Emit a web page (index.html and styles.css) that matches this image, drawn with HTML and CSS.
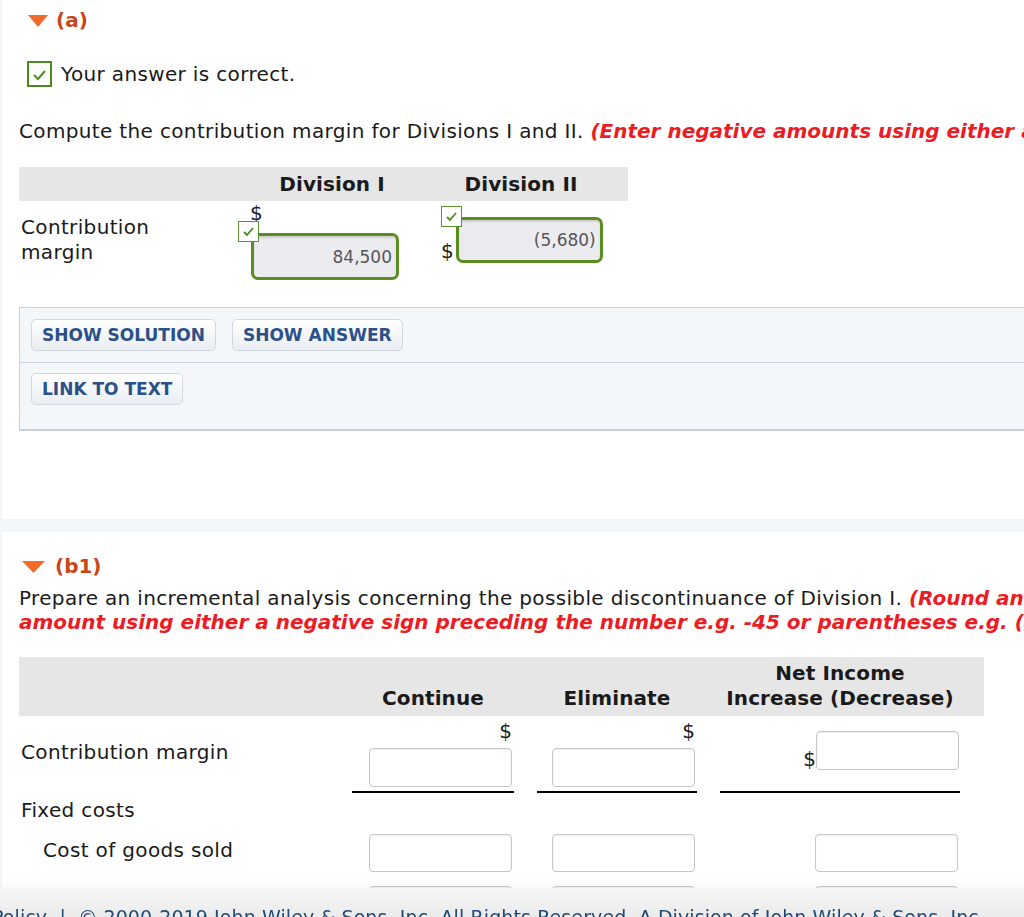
FILE: index.html
```html
<!DOCTYPE html>
<html lang="en">
<head>
<meta charset="utf-8">
<title>Contribution margin</title>
<link rel="stylesheet" href="styles.css">
</head>
<body>
<div class="page">
  <section class="part part-a">
    <h2 class="part-title title-a">
      <svg class="tri" width="20" height="13" viewBox="0 0 20 13"><polygon points="0,0 20,0 10,12" fill="#f26a2b"/></svg>
      <span>(a)</span>
    </h2>

    <div class="correct">
      <span class="chk chk-lg">
        <svg width="21" height="21" viewBox="0 0 21 21"><polyline points="5,11 9,15 16,7" fill="none" stroke="#4b8b1d" stroke-width="2"/></svg>
      </span>
      <span>Your answer is correct.</span>
    </div>

    <p class="prompt">Compute the contribution margin for Divisions I and II. <em class="warn">(Enter negative amounts using either a negative sign preceding the number e.g. -45 or parentheses e.g. (45).)</em></p>

    <div class="t1">
      <div class="t1-head">
        <div></div>
        <div class="th">Division I</div>
        <div class="th">Division II</div>
        <div></div>
      </div>
      <div class="t1-row">
        <div class="t1-label">Contribution<br>margin</div>
        <div class="t1-cell c-div1">
          <span class="chk chk-sm chk-d1">
            <svg width="17" height="17" viewBox="0 0 17 17"><polyline points="4,9 7,12 13,5" fill="none" stroke="#4b8b1d" stroke-width="1.8"/></svg>
          </span>
          <div class="cur">$</div>
          <input class="ans ans-1" value="84,500" readonly>
        </div>
        <div class="t1-cell c-div2">
          <span class="chk chk-sm chk-d2">
            <svg width="17" height="17" viewBox="0 0 17 17"><polyline points="4,9 7,12 13,5" fill="none" stroke="#4b8b1d" stroke-width="1.8"/></svg>
          </span>
          <span class="cur cur-inline">$</span>
          <input class="ans ans-2" value="(5,680)" readonly>
        </div>
        <div></div>
      </div>
    </div>

    <div class="panel panel-top">
      <button class="btn">SHOW SOLUTION</button>
      <button class="btn">SHOW ANSWER</button>
    </div>
    <div class="panel panel-bottom">
      <button class="btn">LINK TO TEXT</button>
    </div>
  </section>

  <section class="part part-b">
    <h2 class="part-title title-b">
      <svg class="tri" width="23" height="13" viewBox="0 0 23 13"><polygon points="0,0 23,0 11.5,12" fill="#f26a2b"/></svg>
      <span>(b1)</span>
    </h2>

    <p class="prompt prompt-b">Prepare an incremental analysis concerning the possible discontinuance of Division I. <em class="warn">(Round answers to 0 decimal places, e.g. 5,275. Enter negative</em><br><em class="warn">amount using either a negative sign preceding the number e.g. -45 or parentheses e.g. (45).)</em></p>

    <div class="t2">
      <div class="t2-grid t2-head">
        <div></div>
        <div class="th">Continue</div>
        <div class="th">Eliminate</div>
        <div class="th">Net Income<br>Increase (Decrease)</div>
      </div>

      <div class="t2-grid t2-row row-cm">
        <div class="t2-label">Contribution margin</div>
        <div class="t2-cell stack">
          <div class="cur">$</div>
          <input class="inp">
        </div>
        <div class="t2-cell stack">
          <div class="cur">$</div>
          <input class="inp">
        </div>
        <div class="t2-cell inline">
          <span class="cur">$</span>
          <input class="inp">
        </div>
      </div>

      <div class="t2-grid t2-row row-head">
        <div class="t2-label">Fixed costs</div>
        <div></div><div></div><div></div>
      </div>

      <div class="t2-grid t2-row row-item">
        <div class="t2-label indent">Cost of goods sold</div>
        <div class="t2-cell"><input class="inp"></div>
        <div class="t2-cell"><input class="inp"></div>
        <div class="t2-cell"><input class="inp"></div>
      </div>

      <div class="t2-grid t2-row row-item">
        <div class="t2-label indent">Salaries and wages</div>
        <div class="t2-cell"><input class="inp"></div>
        <div class="t2-cell"><input class="inp"></div>
        <div class="t2-cell"><input class="inp"></div>
      </div>
    </div>
  </section>
</div>

<footer class="footer">
  <div class="footer-text">Privacy Policy&nbsp;&nbsp;|&nbsp; © 2000-2019 John Wiley &amp; Sons, Inc. All Rights Reserved. A Division of John Wiley &amp; Sons, Inc.</div>
</footer>
</body>
</html>
```

FILE: styles.css
```css
html, body {
  margin: 0;
  padding: 0;
  overflow: hidden;
  height: 100%;
}

body {
  background: #f4f7fa;
  font-family: "DejaVu Sans", Verdana, sans-serif;
  font-size: 20px;
  letter-spacing: 0.35px;
  color: #1a1a1a;
}

.page {
  background: #f4f7fa;
  width: 1024px;
}

.part {
  background: #fff;
  margin-left: 2px;
  padding-left: 17px;
  overflow: hidden;
}

.part-a {
  height: 519px;
}

.part-b {
  margin-top: 13px;
  height: 600px;
}

.part-title {
  margin: 0;
  display: flex;
  align-items: center;
  font-size: 20px;
  font-weight: bold;
  letter-spacing: 0;
  color: #c9461b;
  line-height: 24px;
}

.title-a {
  padding-top: 8px;
  margin-left: 9px;
  gap: 8px;
}

.title-b {
  padding-top: 22px;
  margin-left: 3px;
  gap: 10px;
}

.tri {
  display: block;
  margin-top: 2px;
}

.correct {
  display: flex;
  align-items: center;
  gap: 9px;
  margin-top: 29px;
  margin-left: 8px;
  height: 26px;
  line-height: 24px;
}

.chk {
  display: flex;
  align-items: center;
  justify-content: center;
  background: #fff;
  box-sizing: border-box;
}

.chk-lg {
  width: 25px;
  height: 26px;
  border: 2px solid #4b8b1d;
}

.chk-sm {
  width: 21px;
  height: 21px;
  border: 1.5px solid #5c9130;
  position: absolute;
  z-index: 2;
}

.prompt {
  margin: 32px 0 0;
  line-height: 24px;
  white-space: nowrap;
}

.warn {
  color: #ec1c24;
  font-weight: bold;
  font-style: italic;
  letter-spacing: 0;
}

/* table 1 */
.t1 {
  width: 609px;
  margin-top: 24px;
}

.t1-head,
.t1-row {
  display: grid;
  grid-template-columns: 219px 188px 190px 12px;
}

.t1-head {
  background: #e6e6e6;
  height: 34px;
  align-items: center;
}

.th {
  text-align: center;
  font-weight: bold;
  letter-spacing: 0.1px;
  line-height: 25px;
}

.t1-row {
  height: 90px;
}

.t1-label {
  padding-top: 14px;
  padding-left: 2px;
  line-height: 25px;
}

.t1-cell {
  position: relative;
}

.cur {
  line-height: 20px;
  letter-spacing: 0;
}

.c-div1 {
  padding-left: 12px;
  padding-top: 2px;
}

.c-div1 .cur {
  height: 20px;
}

.chk-d1 {
  left: 0;
  top: 20px;
}

.c-div2 {
  display: flex;
  align-items: flex-end;
  padding-left: 15px;
  padding-top: 16px;
  height: 46px;
}

.chk-d2 {
  left: 15px;
  top: 5px;
}

.cur-inline {
  line-height: 20px;
  margin-bottom: 2px;
  margin-right: 2px;
}

.ans {
  box-sizing: border-box;
  border: 3px solid #5b8c1f;
  border-radius: 7px;
  background: #ececf0;
  box-shadow: inset 0 2px 2px rgba(0, 0, 0, 0.12);
  font-family: "DejaVu Sans", Verdana, sans-serif;
  font-size: 17px;
  color: #555;
  text-align: right;
  padding: 0 4px 0 0;
  outline: none;
}

.ans-1 {
  display: block;
  width: 148px;
  height: 47px;
  margin-top: 10px;
  margin-left: 1px;
}

.ans-2 {
  width: 147px;
  height: 46px;
}

/* panels */
.panel {
  background: #f4f7fa;
  border: 1px solid #c9d1dc;
  border-right: none;
  margin-right: -40px;
  display: flex;
  gap: 16px;
}

.panel-top {
  margin-top: 16px;
  padding: 11px 11px 11px;
}

.panel-bottom {
  border-top: none;
  border-bottom: 2px solid #c6cfdb;
  padding: 10px 11px 24px;
}

.btn {
  height: 32px;
  padding: 0 10px;
  border: 1px solid #d2d8e0;
  border-radius: 5px;
  background: linear-gradient(#ffffff, #e9edf2);
  font-family: "DejaVu Sans", Verdana, sans-serif;
  font-size: 17px;
  font-weight: bold;
  color: #2c5189;
  white-space: nowrap;
}

/* part b */
.prompt-b {
  margin-top: 8px;
}

.t2 {
  margin-top: 23px;
  width: 965px;
}

.t2-grid {
  display: grid;
  grid-template-columns: 310px 162px 160px 240px;
  column-gap: 23px;
  padding-right: 24px;
}

.t2-head {
  background: #e6e6e6;
  height: 59px;
  box-sizing: border-box;
  align-items: end;
  padding-bottom: 5px;
}

.t2-label {
  padding-left: 2px;
  line-height: 25px;
  white-space: nowrap;
}

.indent {
  padding-left: 24px;
}

.row-cm {
  height: 77px;
}

.row-cm .t2-label {
  padding-top: 24px;
}

.row-cm .t2-cell {
  border-bottom: 2px solid #000;
  box-sizing: border-box;
}

.stack {
  display: flex;
  flex-direction: column;
  align-items: flex-end;
  padding-top: 5px;
  padding-right: 2px;
}

.stack .cur {
  line-height: 20px;
  height: 20px;
}

.stack .inp {
  margin-top: 7px;
}

.inline {
  display: flex;
  justify-content: flex-end;
  align-items: flex-end;
  padding-right: 1px;
  padding-bottom: 21px;
}

.inline .cur {
  margin-bottom: 1px;
}

.inp {
  box-sizing: border-box;
  width: 143px;
  height: 39px;
  border: 1px solid #c6c6c6;
  border-radius: 4px;
  background: #fff;
  box-shadow: inset 0 1px 2px rgba(0, 0, 0, 0.07);
  font-family: "DejaVu Sans", Verdana, sans-serif;
  font-size: 17px;
  outline: none;
}

.row-head {
  height: 32px;
}

.row-head .t2-label {
  padding-top: 5px;
}

.row-item {
  height: 52px;
}

.row-item .t2-label {
  padding-top: 13px;
}

.row-item .t2-cell {
  display: flex;
  justify-content: flex-end;
  align-items: flex-start;
  padding-top: 9px;
  padding-right: 2px;
}

.row-item .inp {
  height: 38px;
}

/* footer */
.footer {
  position: fixed;
  left: 0;
  right: 0;
  bottom: 0;
  height: 29px;
  background: linear-gradient(#f6f6f6, #ebebeb);
  box-shadow: 0 -6px 10px rgba(0, 0, 0, 0.025);
  overflow: hidden;
}

.footer-text {
  display: flex;
  justify-content: flex-end;
  width: 985px;
  white-space: nowrap;
  padding-top: 18px;
  line-height: 22px;
  font-family: "DejaVu Sans", "Lucida Grande", sans-serif;
  font-size: 19px;
  letter-spacing: 0.1px;
  color: #1f4a78;
}
```
